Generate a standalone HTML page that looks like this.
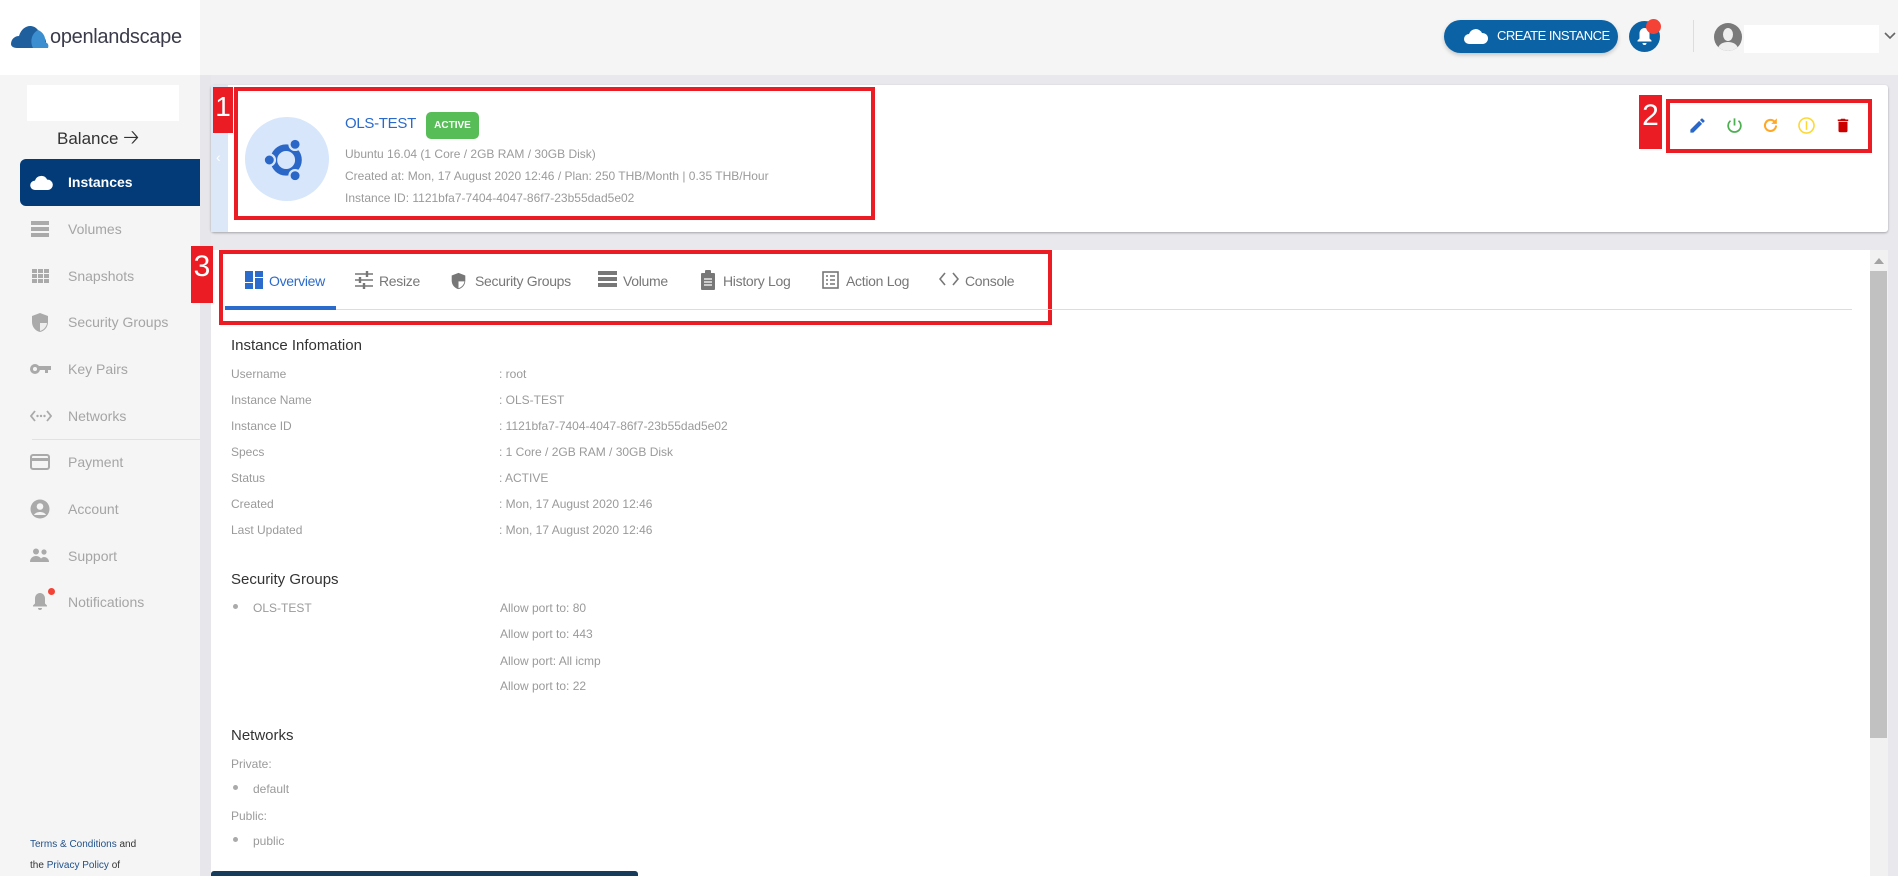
<!DOCTYPE html>
<html><head><meta charset="utf-8"><style>
*{margin:0;padding:0;box-sizing:border-box}
body{width:1898px;height:876px;overflow:hidden;background:#e8e8ed;font-family:"Liberation Sans",sans-serif;position:relative}
.abs{position:absolute}
.t{position:absolute;white-space:nowrap;line-height:1}
.side .t{font-size:14px;color:#a5a5a5;left:68px}
.side svg{position:absolute;left:30px}
.red{position:absolute;border:4px solid #ec1c24}
.lbl{position:absolute;background:#ec1c24;color:#fff;font-size:30px;line-height:1;text-align:center;padding-top:6px}
.tab{position:absolute;top:273px;font-size:14px;color:#777;white-space:nowrap;letter-spacing:-0.3px}
.tab svg{position:absolute;top:-2px}
.g{color:#9a9a9a;font-size:12px}
.h{color:#333;font-size:15px}
.dot{position:absolute;width:5px;height:5px;border-radius:50%;background:#aaa}
</style></head><body>
<!-- header -->
<div class="abs" style="left:0;top:0;width:1898px;height:75px;background:#f5f5f5"></div>
<div class="abs" style="left:0;top:0;width:200px;height:75px;background:#fff"></div>
<svg class="abs" style="left:9px;top:24px" width="42" height="26" viewBox="0 0 42 26"><path d="M2 20c0-5 4-8 8-8 2-7 7-10 11-10 6 0 10 5 10 10 4 0 6 3 6 6 0 4-3 6-6 6H8c-4 0-6-2-6-4z" fill="#1f5f9e"/><path d="M24 24c-3-6-2-14 5-18 5 2 8 7 7 12 3 1 4 3 3 6z" fill="#3b8fd0"/></svg>
<div class="t" style="left:50px;top:27px;font-size:20px;color:#3a3a4a;letter-spacing:-0.3px">openlandscape</div>
<div class="abs" style="left:1444px;top:20px;width:174px;height:33px;border-radius:17px;background:#0b63a5;box-shadow:0 2px 4px rgba(0,0,0,.2)"></div>
<svg class="abs" style="left:1464px;top:27px" width="24" height="17" viewBox="0 0 24 17"><path d="M5 17a5 5 0 0 1 0-10 7 7 0 0 1 13-1 5.5 5.5 0 0 1 1 11z" fill="#fff"/></svg>
<div class="t" style="left:1497px;top:29px;font-size:13px;color:#fff;letter-spacing:-0.5px">CREATE INSTANCE</div>
<div class="abs" style="left:1629px;top:21px;width:31px;height:31px;border-radius:50%;background:#0b63a5"></div>
<svg class="abs" style="left:1637px;top:27px" width="15" height="19" viewBox="0 0 15 19"><path d="M7.5 1c3 0 5 2.5 5 5.5v5l2 2v1H.5v-1l2-2v-5C2.5 3.5 4.5 1 7.5 1zM5.5 16h4a2 2 0 0 1-4 0z" fill="#fff"/></svg>
<div class="abs" style="left:1646px;top:19px;width:15px;height:15px;border-radius:50%;background:#f44336"></div>
<div class="abs" style="left:1693px;top:20px;width:1px;height:32px;background:#ddd"></div>
<div class="abs" style="left:1714px;top:23px;width:28px;height:28px;border-radius:50%;background:#7a7a7a;overflow:hidden"><div class="abs" style="left:9px;top:5px;width:10px;height:13px;border-radius:50%;background:#eee"></div><div class="abs" style="left:4px;top:19px;width:20px;height:14px;border-radius:50%;background:#eee"></div></div>
<div class="abs" style="left:1744px;top:25px;width:135px;height:28px;background:#fff"></div>
<svg class="abs" style="left:1884px;top:32px" width="12" height="8" viewBox="0 0 12 8"><path d="M1 1l5 5 5-5" stroke="#666" stroke-width="1.6" fill="none"/></svg>
<!-- sidebar -->
<div class="side abs" style="left:0;top:75px;width:200px;height:801px;background:#f5f5f5"></div>
<div class="abs" style="left:200px;top:75px;width:11px;height:801px;background:#e6e6eb"></div>
<div class="side">
<div class="abs" style="left:27px;top:85px;width:152px;height:36px;background:#fff"></div>
<div class="t" style="left:57px;top:128px;font-size:17px;color:#333;">Balance <span style="font-size:20px">&#129122;</span></div>
<div class="abs" style="left:20px;top:159px;width:180px;height:47px;background:#023b78;border-radius:6px 0 0 6px"></div>
<svg style="top:174px" width="23" height="16" viewBox="0 0 24 17"><path d="M5 17a5 5 0 0 1 0-10 7 7 0 0 1 13-1 5.5 5.5 0 0 1 1 11z" fill="#fff"/></svg>
<div class="t" style="top:175px;color:#fff;font-weight:bold">Instances</div>
<svg style="top:221px" width="20" height="16"><rect x="1" y="0" width="18" height="4" fill="#aaa"/><rect x="1" y="6" width="18" height="4" fill="#aaa"/><rect x="1" y="12" width="18" height="4" fill="#aaa"/></svg>
<div class="t" style="top:222px">Volumes</div>
<svg style="top:269px" width="20" height="14"><g fill="#aaa"><rect x="2" y="0" width="5" height="4"/><rect x="8" y="0" width="5" height="4"/><rect x="14" y="0" width="5" height="4"/><rect x="2" y="5" width="5" height="4"/><rect x="8" y="5" width="5" height="4"/><rect x="14" y="5" width="5" height="4"/><rect x="2" y="10" width="5" height="4"/><rect x="8" y="10" width="5" height="4"/><rect x="14" y="10" width="5" height="4"/></g></svg>
<div class="t" style="top:269px">Snapshots</div>
<svg style="top:312px" width="20" height="21" viewBox="0 0 20 21"><path d="M10 1l8 3v6c0 5-3.5 9-8 10-4.5-1-8-5-8-10V4z" fill="#aaa"/><path d="M10 3v8h7c-.5 4-3.5 7-7 8z" fill="#eee"/></svg>
<div class="t" style="top:315px">Security Groups</div>
<svg style="top:363px" width="22" height="12"><circle cx="5" cy="6" r="5" fill="#aaa"/><circle cx="5" cy="6" r="2" fill="#f5f5f5"/><rect x="9" y="3" width="12" height="4" fill="#aaa"/><rect x="15" y="6" width="3" height="4" fill="#aaa"/></svg>
<div class="t" style="top:362px">Key Pairs</div>
<svg style="top:409px" width="22" height="14"><path d="M5 2L1 7l4 5M17 2l4 5-4 5" stroke="#aaa" stroke-width="1.8" fill="none"/><circle cx="7.5" cy="7" r="1.2" fill="#aaa"/><circle cx="11" cy="7" r="1.2" fill="#aaa"/><circle cx="14.5" cy="7" r="1.2" fill="#aaa"/></svg>
<div class="t" style="top:409px">Networks</div>
<div class="abs" style="left:32px;top:439px;width:168px;height:1px;background:#e2e2e2"></div>
<svg style="top:454px" width="20" height="16"><rect x="1" y="1" width="18" height="14" rx="2" fill="none" stroke="#aaa" stroke-width="2"/><rect x="1" y="4" width="18" height="3" fill="#aaa"/></svg>
<div class="t" style="top:455px">Payment</div>
<svg style="top:499px" width="20" height="20"><circle cx="10" cy="10" r="9.5" fill="#aaa"/><circle cx="10" cy="7.5" r="3.3" fill="#f5f5f5"/><path d="M4 16c2-4 10-4 12 0" fill="#f5f5f5"/></svg>
<div class="t" style="top:502px">Account</div>
<svg style="top:548px" width="20" height="14"><circle cx="6" cy="3.5" r="3" fill="#aaa"/><circle cx="14" cy="4" r="2.6" fill="#aaa"/><path d="M0 14c0-4 3-6 6-6s6 2 6 6zM10 14c0-3 2-5 4-5s5 1.5 5 5z" fill="#aaa"/></svg>
<div class="t" style="top:549px">Support</div>
<svg style="top:590px" width="20" height="22"><path d="M10 3c3 0 5 2.5 5 5.5v5l2 2v1H3v-1l2-2v-5C5 5.5 7 3 10 3zM8 18h4a2 2 0 0 1-4 0z" fill="#aaa"/></svg>
<div class="abs" style="left:48px;top:588px;width:7px;height:7px;border-radius:50%;background:#f44336"></div>
<div class="t" style="top:595px">Notifications</div>
<div class="t" style="left:30px;top:840px;font-size:10px;color:#333"><span style="color:#1f4f8a">Terms &amp; Conditions</span> and</div>
<div class="t" style="left:30px;top:861px;font-size:10px;color:#333">the <span style="color:#1f4f8a">Privacy Policy</span> of</div>
</div>
<!-- top card -->
<div class="abs" style="left:211px;top:85px;width:1677px;height:147px;background:#fff;border-radius:3px;box-shadow:0 1px 2px rgba(0,0,0,.3)"></div>
<div class="abs" style="left:211px;top:85px;width:17px;height:147px;background:#dce8f8"></div>
<div class="t" style="left:216px;top:150px;font-size:14px;color:#fff">&#8249;</div>
<div class="red" style="left:234px;top:87px;width:641px;height:133px"></div>
<div class="lbl" style="left:213px;top:87px;width:20px;height:46px;font-size:28px">1</div>
<div class="abs" style="left:245px;top:117px;width:84px;height:84px;border-radius:50%;background:#d7e6fb"></div>
<svg class="abs" style="left:257px;top:132px" width="56" height="56" viewBox="0 0 50 50"><circle cx="26" cy="25" r="11" fill="none" stroke="#2b67c6" stroke-width="6"/><circle cx="11" cy="25" r="5" fill="#2b67c6" stroke="#d7e6fb" stroke-width="2"/><circle cx="34" cy="11" r="5" fill="#2b67c6" stroke="#d7e6fb" stroke-width="2"/><circle cx="34" cy="39" r="5" fill="#2b67c6" stroke="#d7e6fb" stroke-width="2"/></svg>
<div class="t" style="left:345px;top:116px;font-size:15px;color:#2a6acb;letter-spacing:-0.3px">OLS-TEST</div>
<div class="abs" style="left:426px;top:112px;width:53px;height:27px;border-radius:5px;background:#57bd57;color:#fff;font-size:10px;text-align:center;line-height:27px;font-weight:bold">ACTIVE</div>
<div class="t g" style="left:345px;top:148px">Ubuntu 16.04 (1 Core / 2GB RAM / 30GB Disk)</div>
<div class="t g" style="left:345px;top:170px">Created at: Mon, 17 August 2020 12:46 / Plan: 250 THB/Month | 0.35 THB/Hour</div>
<div class="t g" style="left:345px;top:192px">Instance ID: 1121bfa7-7404-4047-86f7-23b55dad5e02</div>
<div class="lbl" style="left:1639px;top:95px;width:23px;height:54px">2</div>
<div class="red" style="left:1666px;top:99px;width:206px;height:54px"></div>
<svg class="abs" style="left:1688px;top:116px" width="19" height="19" viewBox="0 0 24 24"><path d="M3 17.25V21h3.75L17.81 9.94l-3.75-3.75zM20.71 7.04a1 1 0 0 0 0-1.41l-2.34-2.34a1 1 0 0 0-1.41 0l-1.83 1.83 3.75 3.75z" fill="#2b67c6"/></svg>
<svg class="abs" style="left:1725px;top:116px" width="19" height="19" viewBox="0 0 24 24"><path d="M12 3v9M7 6a8 8 0 1 0 10 0" stroke="#4caf50" stroke-width="2.2" fill="none"/></svg>
<svg class="abs" style="left:1761px;top:116px" width="19" height="19" viewBox="0 0 24 24"><path d="M19 12a7 7 0 1 1-2-5" stroke="#ffa726" stroke-width="2.6" fill="none"/><path d="M20 3v7h-7z" fill="#ffa726"/></svg>
<svg class="abs" style="left:1797px;top:116px" width="19" height="19" viewBox="0 0 24 24"><circle cx="12" cy="12" r="9.5" stroke="#fdd835" stroke-width="2" fill="none"/><rect x="11" y="6.5" width="2" height="11" fill="#fdd835"/></svg>
<svg class="abs" style="left:1834px;top:116px" width="18" height="19" viewBox="0 0 24 24"><path d="M6 19a2 2 0 0 0 2 2h8a2 2 0 0 0 2-2V7H6zM19 4h-3.5l-1-1h-5l-1 1H5v2h14z" fill="#cc0000"/></svg>
<!-- second card -->
<div class="abs" style="left:211px;top:250px;width:1677px;height:626px;background:#fff"></div>
<div class="abs" style="left:1870px;top:250px;width:18px;height:626px;background:#f1f1f1"></div>
<div class="abs" style="left:1870px;top:271px;width:17px;height:467px;background:#c1c1c1"></div>
<svg class="abs" style="left:1873px;top:257px" width="12" height="8"><path d="M6 1l5 6H1z" fill="#a3a3a3"/></svg>
<div class="red" style="left:219px;top:250px;width:833px;height:75px"></div>
<div class="lbl" style="left:191px;top:246px;width:22px;height:57px">3</div>
<div class="abs" style="left:225px;top:309px;width:1627px;height:1px;background:#ddd"></div>
<div class="abs" style="left:225px;top:306px;width:111px;height:4px;background:#2b6bcc"></div>
<div class="tab" style="left:245px;color:#2b6bcc"><svg width="18" height="18" style="left:0"><rect x="0" y="0" width="8" height="11" fill="#2b6bcc"/><rect x="0" y="12" width="8" height="6" fill="#2b6bcc"/><rect x="10" y="0" width="8" height="6" fill="#2b6bcc"/><rect x="10" y="7" width="8" height="11" fill="#2b6bcc"/></svg><span style="margin-left:24px">Overview</span></div>
<div class="tab" style="left:355px"><svg width="18" height="18"><g stroke="#777" stroke-width="1.6"><path d="M0 3h18M0 9h18M0 15h18"/></g><g stroke="#777" stroke-width="2.4"><path d="M12 0v6M5 6v6M9 12v6"/></g></svg><span style="margin-left:24px">Resize</span></div>
<div class="tab" style="left:450px"><svg width="17" height="20" viewBox="0 0 20 21"><path d="M10 1l8 3v6c0 5-3.5 9-8 10-4.5-1-8-5-8-10V4z" fill="#777"/><path d="M10 3v8h7c-.5 4-3.5 7-7 8z" fill="#fff"/></svg><span style="margin-left:25px">Security Groups</span></div>
<div class="tab" style="left:598px"><svg width="19" height="17"><rect y="0" width="19" height="4" fill="#777"/><rect y="6" width="19" height="4" fill="#777"/><rect y="12" width="19" height="4" fill="#777"/></svg><span style="margin-left:25px">Volume</span></div>
<div class="tab" style="left:700px"><svg width="16" height="20" style="top:-3px"><rect x="1" y="3" width="14" height="17" rx="1" fill="#777"/><rect x="5" y="0" width="6" height="5" rx="1" fill="#777"/><path d="M4 9h8M4 12h8M4 15h8" stroke="#fff" stroke-width="1.3"/></svg><span style="margin-left:23px">History Log</span></div>
<div class="tab" style="left:822px"><svg width="17" height="18"><rect x="1" y="1" width="15" height="16" fill="none" stroke="#777" stroke-width="1.6"/><path d="M4 5h2M8 5h5M4 9h2M8 9h5M4 13h2M8 13h5" stroke="#777" stroke-width="1.4"/></svg><span style="margin-left:24px">Action Log</span></div>
<div class="tab" style="left:939px"><svg width="20" height="16"><path d="M6 2L1 8l5 6M14 2l5 6-5 6" stroke="#777" stroke-width="1.6" fill="none"/></svg><span style="margin-left:26px">Console</span></div>
<div class="t h" style="left:231px;top:338px">Instance Infomation</div>
<div class="t g" style="left:231px;top:368px">Username</div><div class="t g" style="left:499px;top:368px">: root</div>
<div class="t g" style="left:231px;top:394px">Instance Name</div><div class="t g" style="left:499px;top:394px">: OLS-TEST</div>
<div class="t g" style="left:231px;top:420px">Instance ID</div><div class="t g" style="left:499px;top:420px">: 1121bfa7-7404-4047-86f7-23b55dad5e02</div>
<div class="t g" style="left:231px;top:446px">Specs</div><div class="t g" style="left:499px;top:446px">: 1 Core / 2GB RAM / 30GB Disk</div>
<div class="t g" style="left:231px;top:472px">Status</div><div class="t g" style="left:499px;top:472px">: ACTIVE</div>
<div class="t g" style="left:231px;top:498px">Created</div><div class="t g" style="left:499px;top:498px">: Mon, 17 August 2020 12:46</div>
<div class="t g" style="left:231px;top:524px">Last Updated</div><div class="t g" style="left:499px;top:524px">: Mon, 17 August 2020 12:46</div>
<div class="t h" style="left:231px;top:572px">Security Groups</div>
<div class="dot" style="left:233px;top:604px"></div><div class="t g" style="left:253px;top:602px">OLS-TEST</div>
<div class="t g" style="left:500px;top:602px">Allow port to: 80</div>
<div class="t g" style="left:500px;top:628px">Allow port to: 443</div>
<div class="t g" style="left:500px;top:655px">Allow port: All icmp</div>
<div class="t g" style="left:500px;top:680px">Allow port to: 22</div>
<div class="t h" style="left:231px;top:728px">Networks</div>
<div class="t g" style="left:231px;top:758px">Private:</div>
<div class="dot" style="left:233px;top:785px"></div><div class="t g" style="left:253px;top:783px">default</div>
<div class="t g" style="left:231px;top:810px">Public:</div>
<div class="dot" style="left:233px;top:837px"></div><div class="t g" style="left:253px;top:835px">public</div>
<div class="abs" style="left:211px;top:871px;width:427px;height:5px;background:#173b5a;border-radius:3px 3px 0 0"></div>
</body></html>
